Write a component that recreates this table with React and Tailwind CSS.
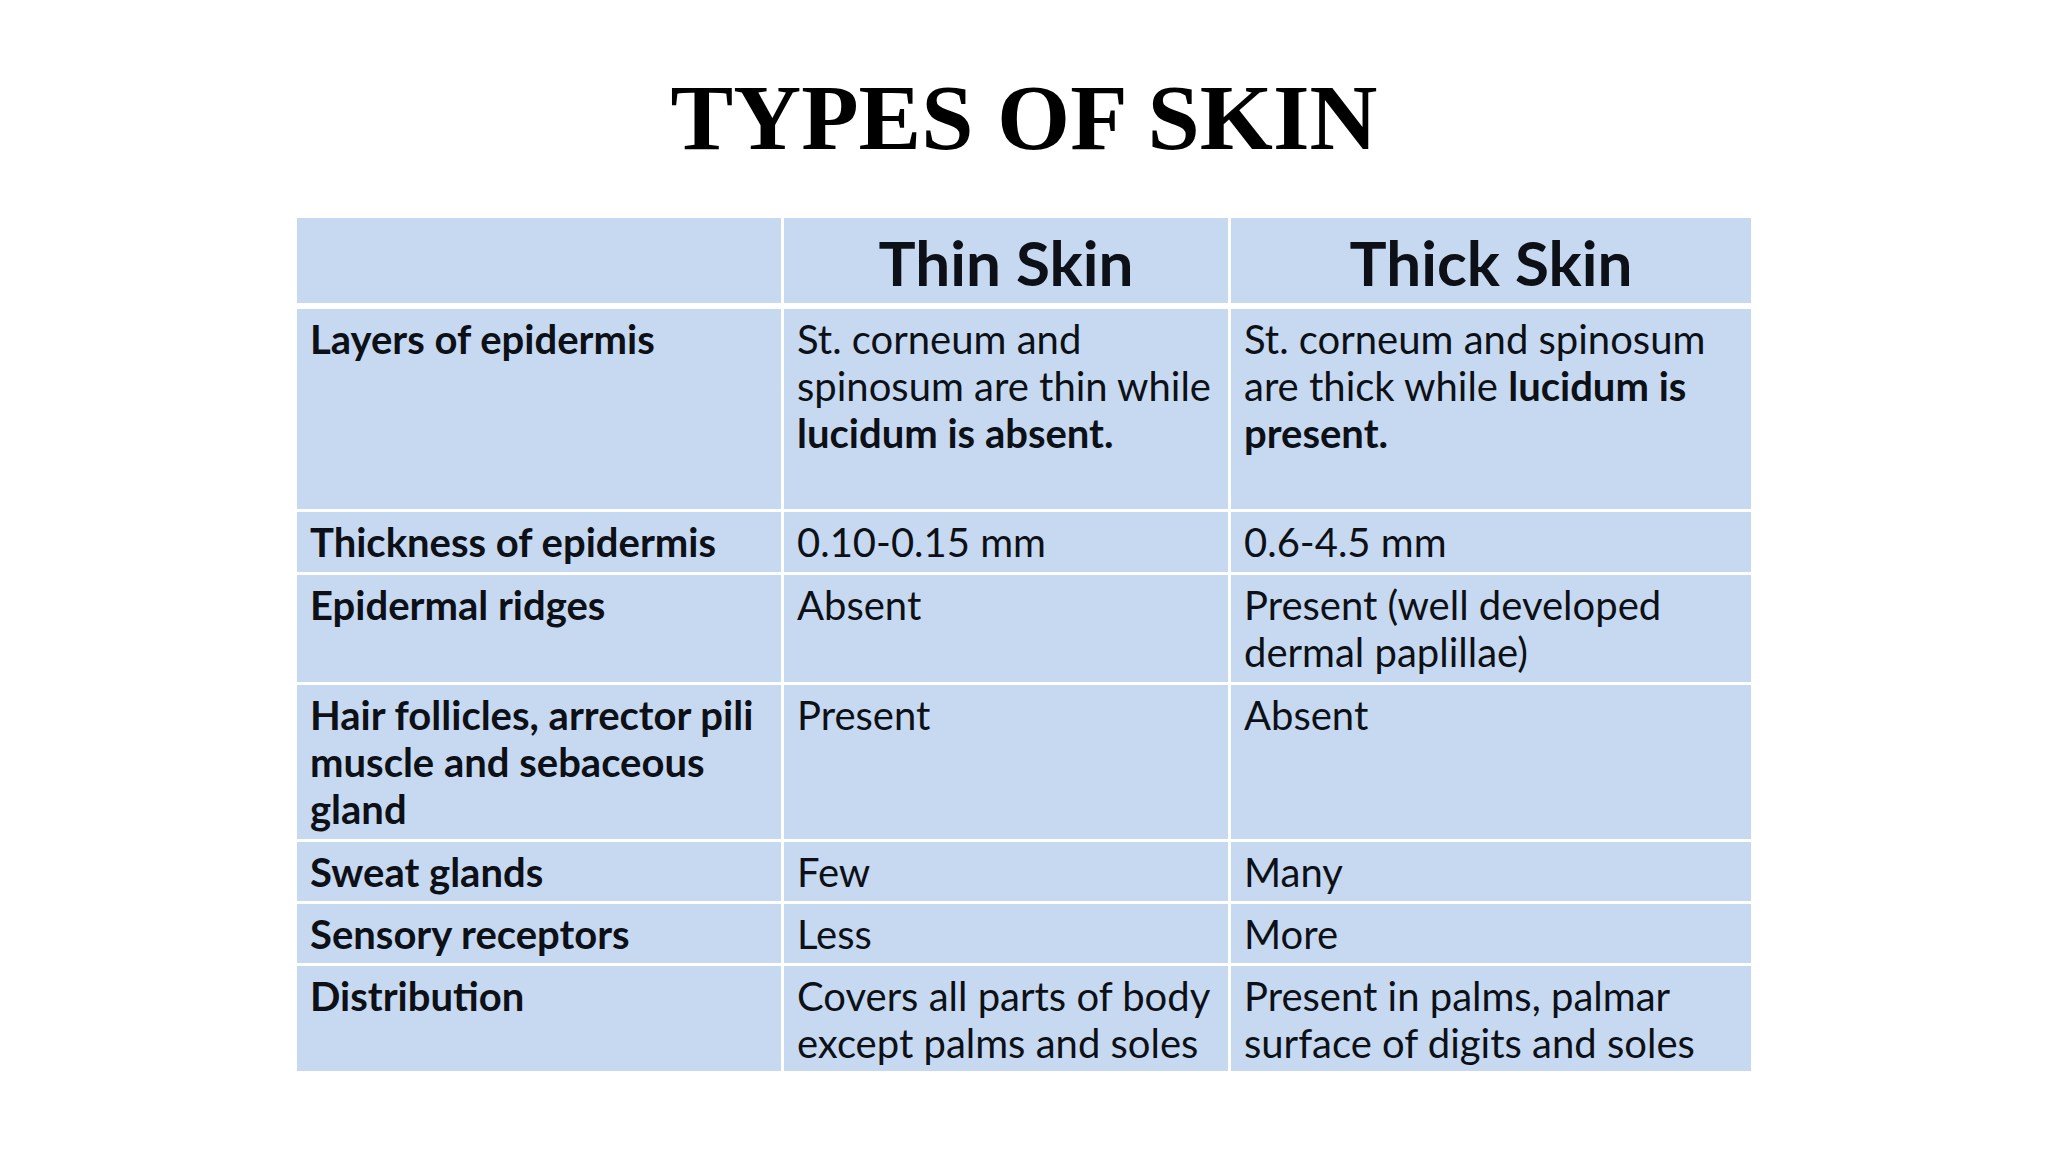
import React from 'react';

const rows = [
  {
    label: ['Layers of epidermis'],
    thin: [
      'St. corneum and',
      'spinosum are thin while',
      <b key="b">lucidum is absent.</b>,
    ],
    thick: [
      'St. corneum and spinosum',
      <>are thick while <b>lucidum is</b></>,
      <b key="b">present.</b>,
    ],
  },
  { label: ['Thickness of epidermis'], thin: ['0.10-0.15 mm'], thick: ['0.6-4.5 mm'] },
  {
    label: ['Epidermal ridges'],
    thin: ['Absent'],
    thick: ['Present (well developed', 'dermal paplillae)'],
  },
  {
    label: ['Hair follicles, arrector pili', 'muscle and sebaceous', 'gland'],
    thin: ['Present'],
    thick: ['Absent'],
  },
  { label: ['Sweat glands'], thin: ['Few'], thick: ['Many'] },
  { label: ['Sensory receptors'], thin: ['Less'], thick: ['More'] },
  {
    label: ['Distribution'],
    thin: ['Covers all parts of body', 'except palms and soles'],
    thick: ['Present in palms, palmar', 'surface of digits and soles'],
  },
];

const Lines = ({ lines, bold }) => (
  <>
    {lines.map((line, i) => (
      <div key={i} className={bold ? 'font-bold' : ''}>{line}</div>
    ))}
  </>
);

const Cell = ({ children }) => (
  <div className="bg-[#c6d9f1] pl-[13px] pt-[7px] text-[40px] leading-[47px] whitespace-nowrap text-[#0d1117]">
    {children}
  </div>
);

export default function App() {
  return (
    <div className="w-[2048px] h-[1152px] bg-white overflow-hidden">
      <h1 className="mt-[70px] text-center text-[94px] leading-none font-bold text-black font-['Liberation_Serif','Times_New_Roman',serif]">
        TYPES OF SKIN
      </h1>

      <div className="mt-[54px] mx-auto w-[1454px] grid grid-cols-[484px_444px_520px] grid-rows-[88px_200px_60px_107px_154px_59px_59px_105px] gap-[3px] font-['Lato','Noto_Sans',sans-serif]">
        {/* header */}
        <div className="bg-[#c6d9f1] border-b-[3px] border-white" />
        <div className="bg-[#c6d9f1] border-b-[3px] border-white pt-[13px] text-center text-[62px] leading-none font-bold text-[#0d1117]">
          Thin Skin
        </div>
        <div className="bg-[#c6d9f1] border-b-[3px] border-white pt-[13px] text-center text-[62px] leading-none font-bold text-[#0d1117]">
          Thick Skin
        </div>

        {rows.map((r, i) => (
          <React.Fragment key={i}>
            <Cell><Lines lines={r.label} bold /></Cell>
            <Cell><Lines lines={r.thin} /></Cell>
            <Cell><Lines lines={r.thick} /></Cell>
          </React.Fragment>
        ))}
      </div>
    </div>
  );
}
